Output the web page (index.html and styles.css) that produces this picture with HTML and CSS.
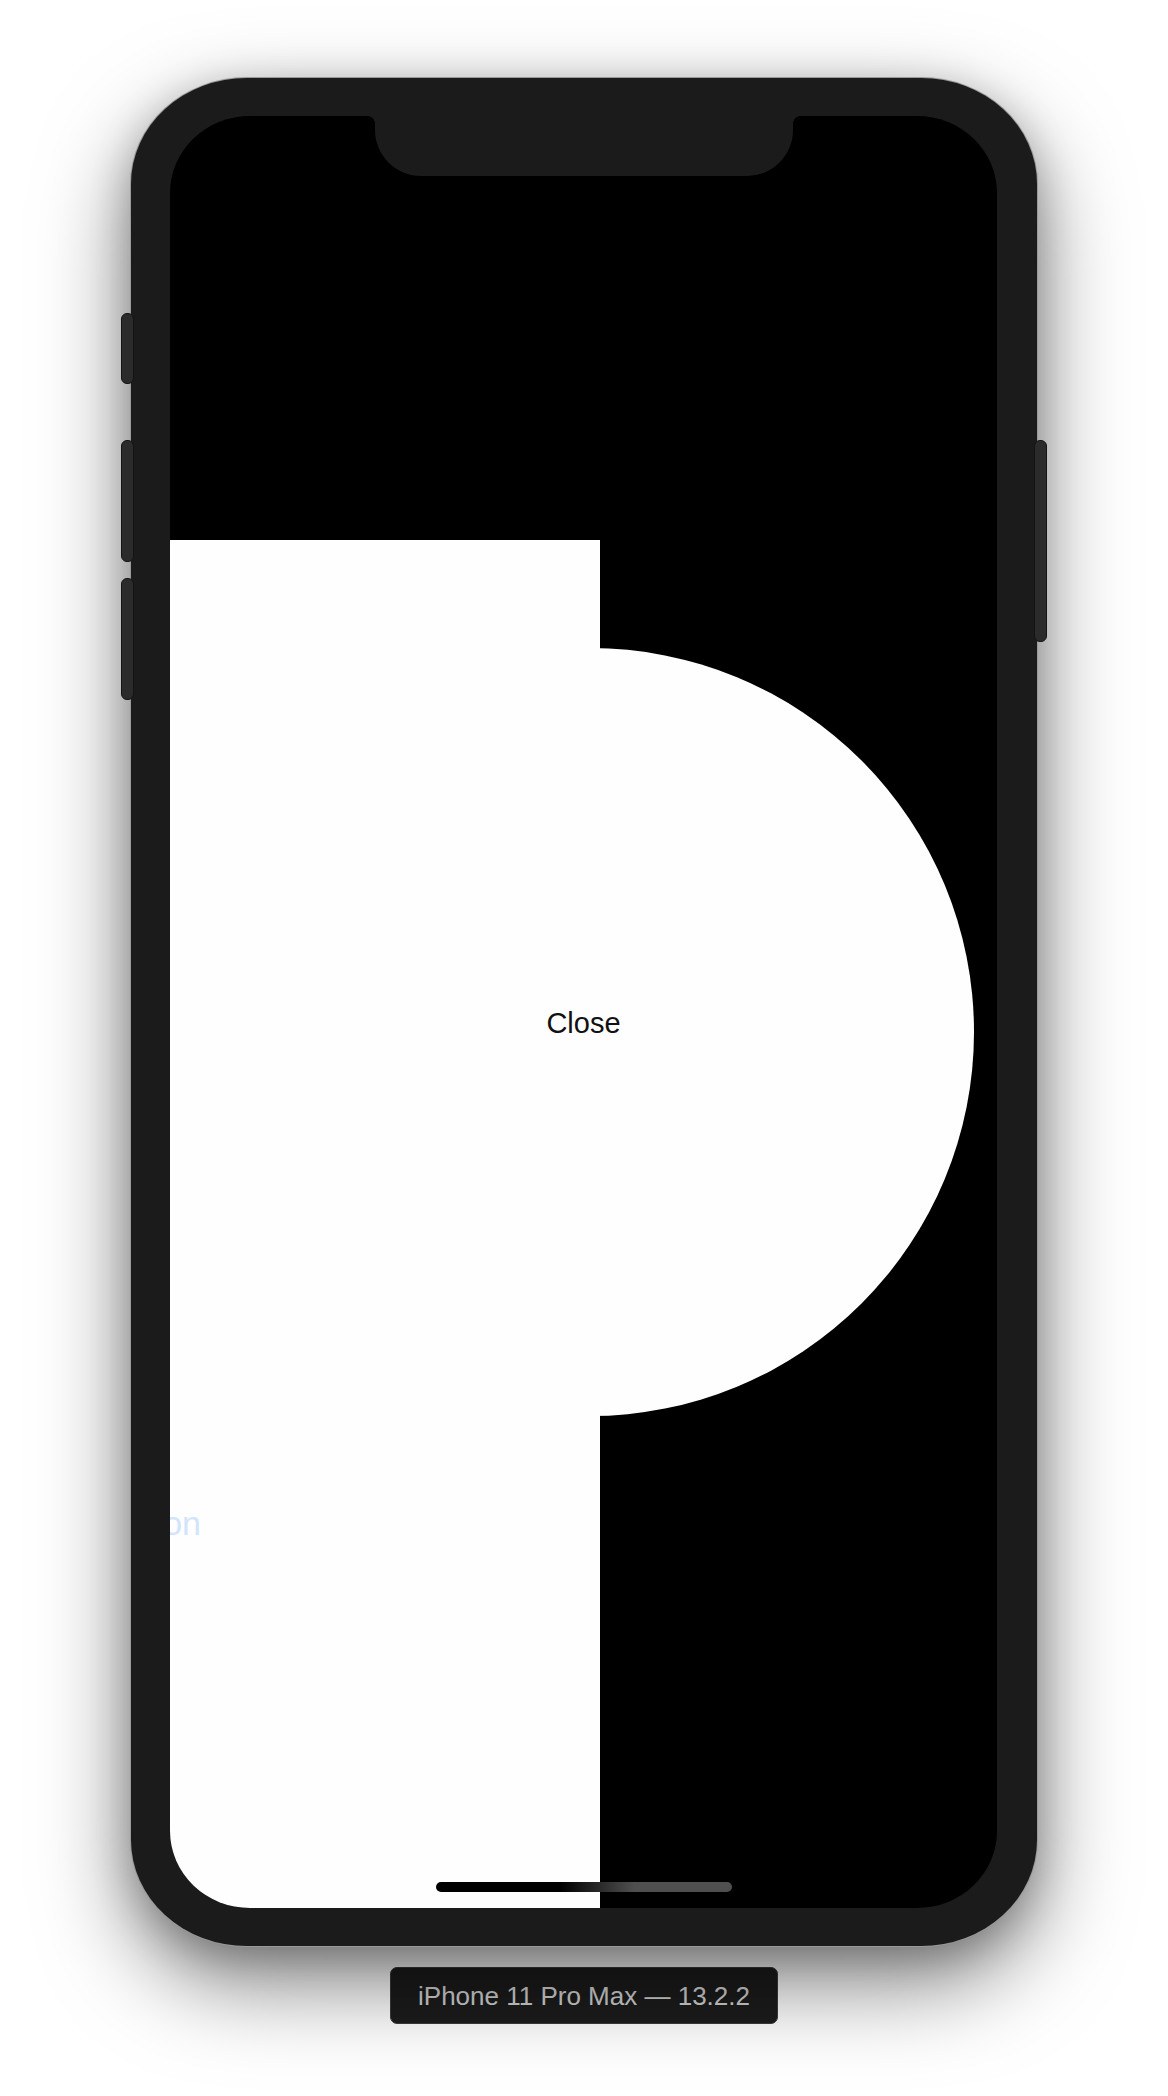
FILE: index.html
```html
<!DOCTYPE html>
<html lang="en">
<head>
<meta charset="utf-8">
<title>iPhone 11 Pro Max — 13.2.2</title>
<link rel="stylesheet" href="styles.css">
</head>
<body>
<main class="stage">
  <div class="phone">
    <span class="side-btn left-1"></span>
    <span class="side-btn left-2"></span>
    <span class="side-btn left-3"></span>
    <span class="side-btn right-1"></span>
    <div class="screen">
      <div class="sheet"></div>
      <div class="disc"></div>
      <div class="close-label">Close</div>
      <div class="ghost-button"><span>Button</span></div>
      <div class="notch"></div>
      <div class="home-indicator"></div>
    </div>
  </div>
  <div class="device-label">iPhone 11 Pro Max — 13.2.2</div>
</main>
</body>
</html>
```
FILE: styles.css
```css
html, body {
  margin: 0;
  padding: 0;
  background: #ffffff;
}

.stage {
  width: 1168px;
  height: 2096px;
  display: flex;
  flex-direction: column;
  align-items: center;
  padding-top: 78px;
  box-sizing: border-box;
  overflow: hidden;
  font-family: "Liberation Sans", Arial, sans-serif;
}

.phone {
  position: relative;
  width: 906px;
  height: 1868px;
  box-sizing: border-box;
  padding: 38px 40px 38px 39px;
  background: #1b1b1b;
  border-radius: 116px / 106px;
  box-shadow:
    0 0 0 1px #9a9a9a,
    0 36px 90px rgba(0, 0, 0, 0.5),
    0 10px 40px rgba(0, 0, 0, 0.22);
}

.side-btn {
  position: absolute;
  width: 13px;
  background: #2b2b2b;
  border: 1px solid #141414;
  box-sizing: border-box;
  border-radius: 6px;
}
.left-1 { left: -10px; top: 235px; height: 71px; }
.left-2 { left: -10px; top: 362px; height: 122px; }
.left-3 { left: -10px; top: 500px; height: 122px; }
.right-1 { right: -10px; top: 362px; height: 202px; }

.screen {
  position: relative;
  width: 827px;
  height: 1792px;
  background: #000000;
  border-radius: 80px / 77px;
  overflow: hidden;
}

.sheet {
  position: absolute;
  left: 0;
  top: 424px;
  width: 430px;
  bottom: 0;
  background: #fefefe;
}

.disc {
  position: absolute;
  left: 36px;
  top: 532px;
  width: 768px;
  height: 768px;
  border-radius: 50%;
  background: #fefefe;
}

.close-label {
  position: absolute;
  left: 0;
  right: 0;
  top: 890px;
  text-align: center;
  font-size: 29px;
  line-height: 34px;
  color: #111111;
}

.ghost-button {
  position: absolute;
  left: 0;
  top: 1387px;
  width: 31px;
  display: flex;
  justify-content: flex-end;
  white-space: nowrap;
  font-size: 34px;
  line-height: 40px;
  color: #d2e4fc;
}

.notch {
  position: absolute;
  left: 205px;
  top: 0;
  width: 418px;
  height: 60px;
  background: #1b1b1b;
  border-radius: 0 0 46px 46px;
}
.notch::before,
.notch::after {
  content: "";
  position: absolute;
  top: 0;
  width: 7px;
  height: 7px;
}
.notch::before {
  left: -7px;
  background: radial-gradient(circle at 0 100%, transparent 6.5px, #1b1b1b 7px);
}
.notch::after {
  right: -7px;
  background: radial-gradient(circle at 100% 100%, transparent 6.5px, #1b1b1b 7px);
}

.home-indicator {
  position: absolute;
  left: 266px;
  top: 1766px;
  width: 296px;
  height: 10px;
  border-radius: 5px;
  background: linear-gradient(90deg, #000000 0%, #000000 42%, #4f4f4f 67%, #4f4f4f 100%);
}

.device-label {
  margin-top: 21px;
  width: 388px;
  height: 57px;
  box-sizing: border-box;
  display: flex;
  align-items: center;
  justify-content: center;
  background: #1c1c1c;
  border: 1px solid #3c3c3c;
  border-radius: 7px;
  color: #d4d4d4;
  font-size: 26px;
  padding-top: 2px;
}
```
